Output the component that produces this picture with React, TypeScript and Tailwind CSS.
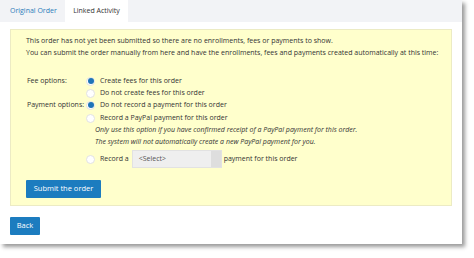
import React from 'react'

function Radio({ checked }: { checked?: boolean }) {
    return (
        <span className="flex items-center justify-center w-[9px] h-[9px] rounded-full bg-white border border-[#e2e2e2] shrink-0">
            {checked && <span className="w-[6px] h-[6px] rounded-full bg-[#1f74b8]" />}
        </span>
    )
}

export default function App() {
    return (
        <div className="bg-white w-[474px] h-[258px] text-[#333] text-[7px]" style={{ fontFamily: '"Open Sans", sans-serif' }}>
            <div className="w-[462px] h-[244px] bg-white shadow-[3px_3px_4px_rgba(0,0,0,0.4)] flex flex-col">

                {/* Tabs */}
                <div className="h-[22px] bg-[#f2f3f6] flex items-stretch shrink-0">
                    <div className="w-[65px] pl-[10px] flex items-center text-[#2c7cba]">Original Order</div>
                    <div className="w-[63px] bg-white flex items-center justify-center">Linked Activity</div>
                </div>

                {/* Content */}
                <div className="pt-[7px] px-[10px]">
                    <div className="bg-[#ffffcc] border border-[#ecebc4] pl-[15px] pt-[5px] pb-[7px]">
                        <p className="leading-[12px]">This order has not yet been submitted so there are no enrollments, fees or payments to show.</p>
                        <p className="leading-[12px]">You can submit the order manually from here and have the enrollments, fees and payments created automatically at this time:</p>

                        <div className="mt-[16px] grid grid-cols-[60px_1fr] leading-[12px]">
                            <div className="pl-[1px]">Fee options:</div>
                            <div className="flex items-center gap-[5px] h-[12px]"><Radio checked />Create fees for this order</div>
                            <div />
                            <div className="flex items-center gap-[5px] h-[12px]"><Radio />Do not create fees for this order</div>
                            <div className="pl-[1px]">Payment options:</div>
                            <div className="flex items-center gap-[5px] h-[12px]"><Radio checked />Do not record a payment for this order</div>
                            <div />
                            <div className="mt-[1px]">
                                <div className="flex items-center gap-[5px] h-[12px]"><Radio />Record a PayPal payment for this order</div>
                                <div className="pl-[9px] italic">
                                    <p>Only use this option if you have confirmed receipt of a PayPal payment for this order.</p>
                                    <p>The system will not automatically create a new PayPal payment for you.</p>
                                </div>
                            </div>
                            <div />
                            <div className="flex items-center gap-[5px] h-[18px] mt-[2px]">
                                <Radio />
                                <span>Record a</span>
                                <span className="flex items-stretch w-[90px] h-[18px] bg-[#efefef] border border-[#e2e2e2] -ml-[2px]">
                                    <span className="flex-1 flex items-center pl-[6px] text-[#555]">&lt;Select&gt;</span>
                                    <span className="w-[10px] bg-[#dedede]" />
                                </span>
                                <span className="-ml-[3px]">payment for this order</span>
                            </div>
                        </div>

                        <button className="mt-[12px] h-[18px] w-[75px] bg-[#1c7cbf] text-white rounded-[1px] text-[7.5px]">Submit the order</button>
                    </div>

                    <button className="mt-[11px] h-[18px] w-[30px] bg-[#1c7cbf] text-white rounded-[1px] text-[7.5px]">Back</button>
                </div>
            </div>
        </div>
    )
}
